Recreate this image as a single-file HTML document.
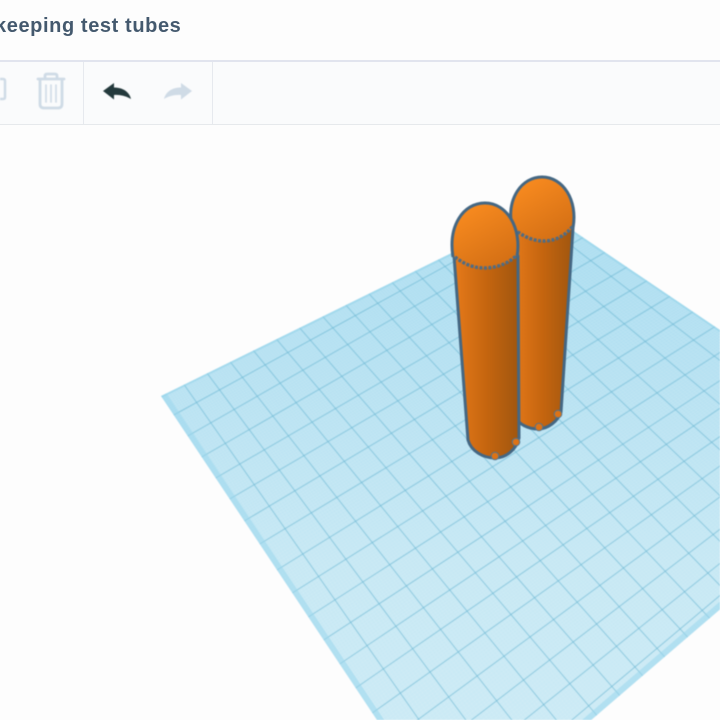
<!DOCTYPE html>
<html lang="en">
<head>
<meta charset="utf-8">
<title>Keeping test tubes</title>
<style>
html,body{margin:0;padding:0;background:#fdfdfd;width:720px;height:720px;overflow:hidden}
body{position:relative;font-family:"Liberation Sans",sans-serif}
#title{position:absolute;left:-5px;top:14px;font-size:20px;line-height:24px;font-weight:bold;letter-spacing:.6px;color:#44596e;white-space:nowrap;filter:blur(.35px)}
#bar{position:absolute;left:0;top:60px;width:720px;height:65px;box-sizing:border-box;background:#fafbfc;border-top:2px solid #e1e4ee;border-bottom:1px solid #e6e9ec}
.div{position:absolute;top:62px;width:1px;height:62px;background:#e6e9ee}
svg{position:absolute;left:0;top:0;overflow:hidden}
</style>
</head>
<body>
<svg id="scene" width="720" height="720" viewBox="0 0 720 720" style="filter:blur(.5px)">
<defs>
<linearGradient id="plate" gradientUnits="userSpaceOnUse" x1="0" y1="209" x2="0" y2="720"><stop offset="0" stop-color="#a8dcf0"/><stop offset=".37" stop-color="#b8e2f2"/><stop offset=".69" stop-color="#c6e8f4"/><stop offset="1" stop-color="#cbeaf5"/></linearGradient>
<linearGradient id="bodyF" x1="0" x2="1" y1="0" y2="0"><stop offset="0" stop-color="#e67a1a"/><stop offset=".5" stop-color="#c5650f"/><stop offset="1" stop-color="#a0560f"/></linearGradient>
<linearGradient id="dome" x1="0.2" x2="0.8" y1="0" y2="1"><stop offset="0" stop-color="#fa8c20"/><stop offset="1" stop-color="#d26e14"/></linearGradient>
<clipPath id="pc"><polygon points="161,396 541,209 902,453 455,837"/></clipPath>
</defs>
<polygon points="161,396 541,209 902,453 455,837" fill="url(#plate)"/>
<g id="grid" clip-path="url(#pc)"></g>
</svg>

<svg width="720" height="720" viewBox="0 0 720 720" style="filter:blur(.45px)">
<!-- back tube -->
<path d="M512,228 L516,418 C519,424 528,429 538,429 C548,429 558,421 561,412 L573,228 Z" fill="url(#bodyF)" stroke="#446783" stroke-width="3" stroke-linejoin="round"/>
<path d="M512,228 C506,198 522,177 542,177 C563,177 578,200 573,228 C562,238 552,241 543,241 C532,241 520,236 512,228 Z" fill="url(#dome)"/>
<path d="M512,228 C506,198 522,177 542,177 C563,177 578,200 573,228" fill="none" stroke="#446783" stroke-width="3"/>
<path d="M514,229 C525,238 535,241 544,241 C555,241 565,236 573,226" fill="none" stroke="#4f6c84" stroke-width="3.4" stroke-dasharray="3 1.5"/>
<circle cx="539" cy="427" r="3.8" fill="#dd7316" stroke="#4f7390" stroke-width="1"/>
<circle cx="558" cy="414" r="3.8" fill="#dd7316" stroke="#4f7390" stroke-width="1"/>
<!-- front tube -->
<path d="M454,256 L468,440 C471,451 483,458 495,458 C506,458 516,450 519,438 L518,256 Z" fill="url(#bodyF)" stroke="#446783" stroke-width="3" stroke-linejoin="round"/>
<path d="M453,256 C448,226 463,203 485,203 C507,203 522,228 517,256 C507,264 495,268 484,268 C473,268 462,263 453,256 Z" fill="url(#dome)"/>
<path d="M453,257 C448,226 463,203 485,203 C507,203 522,228 517,257" fill="none" stroke="#446783" stroke-width="3"/>
<path d="M455,257 C465,265 475,268 484,268 C496,268 508,264 517,255" fill="none" stroke="#4f6c84" stroke-width="3.4" stroke-dasharray="3 1.5"/>
<circle cx="495" cy="456" r="3.8" fill="#dd7316" stroke="#4f7390" stroke-width="1"/>
<circle cx="516" cy="442" r="3.8" fill="#dd7316" stroke="#4f7390" stroke-width="1"/>
</svg>

<div id="bar"></div>
<div class="div" style="left:83px"></div>
<div class="div" style="left:212px"></div>
<div id="title">keeping test tubes</div>

<svg width="720" height="125" viewBox="0 0 720 125" style="filter:blur(.4px)">
<!-- clipped icon at left -->
<path d="M-6,79 H3 Q5,79 5,81 V97 Q5,99 3,99 H-6" fill="none" stroke="#cfdbe6" stroke-width="2.5"/>
<!-- trash -->
<g fill="none" stroke="#cfdbe6" stroke-width="2.8" stroke-linejoin="round" stroke-linecap="round">
<path d="M38,79 H64"/>
<path d="M45,78 V76 Q45,74 47,74 H55 Q57,74 57,76 V78"/>
<path d="M40,80 V104 Q40,108 44,108 H58 Q62,108 62,104 V80"/>
<path d="M46,85 V102 M51,85 V102 M56,85 V102" stroke-width="1.6"/>
</g>
<!-- undo -->
<path d="M103,91 L114,83 V87.5 C122,87.5 129,91 131,99 C126,96 120,94.5 114,95 V99.5 Z" fill="#23393c"/>
<!-- redo -->
<path d="M192,91 L181,83 V87.5 C173,87.5 166,91 164,99 C169,96 175,94.5 181,95 V99.5 Z" fill="#cfdbe6"/>
</svg>

<script>
(function(){
  var uTop=[161],uBot=[455,484,515,544,571,597,620,643,665,688,710,733,757,783,811,841,873,902];
  for(var k=1;k<uBot.length-1;k++)uTop.push(161+23.1*k);
  uTop.push(541);
  function yLT(x){return 396-0.4921*(x-161);}
  function yBR(x){return 713-0.858*(x-600);}
  var vL=[396,415,436,457,478,499,521,544,570,593,617,640,664,688,713,740,768,797,825,837];
  var vR=[541,545,561,583,605,627,647,670,693,715,737,758,778,798,818,838,858,878,895,902];
  function xLB(y){return 161+(y-396)/1.5;}
  function yTR(x){return 209+0.676*(x-541);}
  var s="",i,j,t,a,b,c,d;
  function seg(x1,y1,x2,y2,col,w,op){
    s+='<path d="M'+x1.toFixed(1)+','+y1.toFixed(1)+'L'+x2.toFixed(1)+','+y2.toFixed(1)+'" stroke="'+col+'" stroke-width="'+w+'" stroke-opacity="'+op+'" fill="none"/>';
  }
  for(i=0;i<uBot.length-1;i++){
    for(j=0;j<10;j++){
      t=j/10;
      a=uTop[i]+(uTop[i+1]-uTop[i])*t; b=uBot[i]+(uBot[i+1]-uBot[i])*t;
      seg(a,yLT(a),b,yBR(b),"#ffffff",0.5,0.16);
    }
  }
  for(i=0;i<vL.length-1;i++){
    for(j=0;j<10;j++){
      t=j/10;
      c=vL[i]+(vL[i+1]-vL[i])*t; d=vR[i]+(vR[i+1]-vR[i])*t;
      seg(xLB(c),c,d,yTR(d),"#ffffff",0.5,0.16);
    }
  }
  for(i=1;i<uBot.length-1;i++){ seg(uTop[i],yLT(uTop[i]),uBot[i],yBR(uBot[i]),"#6db8d4",1,0.62); }
  for(i=1;i<vL.length-1;i++){ seg(xLB(vL[i]),vL[i],vR[i],yTR(vR[i]),"#6db8d4",1,0.62); }
  s+='<path d="M161,396L455,837L902,453" fill="none" stroke="#9ad7ec" stroke-width="12" stroke-opacity=".55"/>';
  s+='<path d="M161,396L541,209L902,453" fill="none" stroke="#93d4ea" stroke-width="4" stroke-opacity=".55"/>';
  document.getElementById("grid").innerHTML=s;
})();
</script>
</body>
</html>
